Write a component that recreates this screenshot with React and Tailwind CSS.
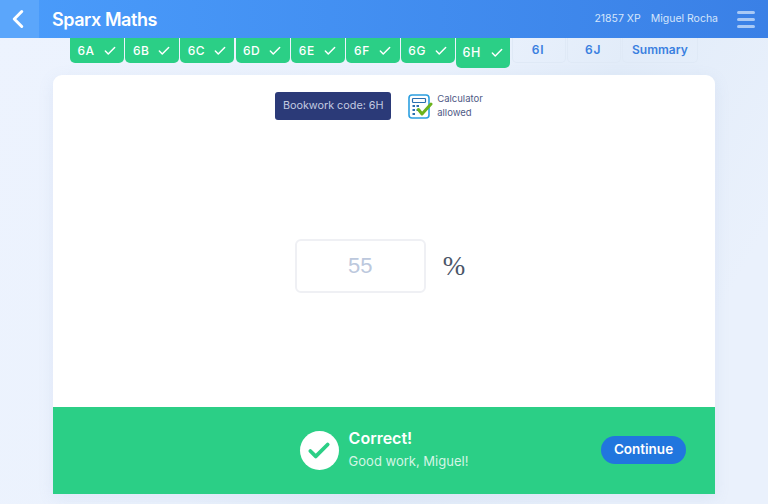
import React from 'react';
import { ChevronLeft, Check } from 'lucide-react';

const font = { fontFamily: '"Inter", "Liberation Sans", sans-serif' };

const doneTabs = ['6A', '6B', '6C', '6D', '6E', '6F', '6G'];
const todoTabs = ['6I', '6J'];

const CalculatorIcon = () => (
  <svg width="25" height="25" viewBox="0 0 25 25" fill="none">
    <rect x="1" y="1" width="20" height="23" rx="3" fill="#fff" stroke="#2b9fe0" strokeWidth="1.6" />
    <rect x="4.5" y="4.5" width="13" height="4" rx="0.8" stroke="#2b6fb0" strokeWidth="1.2" />
    <rect x="4.5" y="11" width="2.5" height="2" fill="#2b6fb0" />
    <rect x="8.5" y="11" width="2.5" height="2" fill="#2b6fb0" />
    <rect x="4.5" y="15" width="2.5" height="2" fill="#2b6fb0" />
    <rect x="8.5" y="15" width="2.5" height="2" fill="#2b6fb0" />
    <rect x="4.5" y="19" width="2.5" height="2" fill="#2b6fb0" />
    <path d="M10.5 15.5l3.5 4.5 9-10" stroke="#6cb31d" strokeWidth="3" strokeLinecap="round" strokeLinejoin="round" />
  </svg>
);

const App = () => {
  return (
    <div
      className="w-[768px] h-[504px] overflow-hidden flex flex-col items-center bg-[linear-gradient(120deg,#edf3fe_0%,#ebf2fd_45%,#e2ecf9_62%,#eaf1fc_85%)]"
      style={font}
    >
      {/* HEADER */}
      <div className="w-full h-[38px] shrink-0 flex items-center bg-[linear-gradient(90deg,#4a9cfb,#3a80e6)] text-white">
        <div className="w-[39px] h-full flex items-center justify-center bg-[#5ba6fb]">
          <ChevronLeft size={30} strokeWidth={2.4} className="text-white mr-[3px]" />
        </div>
        <span className="ml-[13px] text-[18px] font-semibold tracking-[-0.45px]">Sparx Maths</span>
        <div className="ml-auto flex items-center text-[10.5px] text-[#d5e5fb]">
          <span>21857 XP</span>
          <span className="ml-[10px]">Miguel Rocha</span>
          <div className="ml-[19px] mr-[13px] w-[18px] flex flex-col gap-[4px]">
            <div className="h-[3px] rounded-full bg-[#a9c9f5]" />
            <div className="h-[3px] rounded-full bg-[#a9c9f5]" />
            <div className="h-[3px] rounded-full bg-[#a9c9f5]" />
          </div>
        </div>
      </div>

      {/* TABS */}
      <div className="w-full h-[37px] shrink-0 flex items-start gap-[1.2px] pl-[70px]">
        {doneTabs.map((t) => (
          <div key={t} className="w-[54px] h-[25px] flex items-center justify-center gap-[8px] rounded-b-[5px] bg-[#2bcf86] text-white text-[12px] font-medium tracking-[0.5px]">
            <span>{t}</span>
            <Check size={14} strokeWidth={2.5} />
          </div>
        ))}
        <div className="w-[54px] h-[30px] flex items-center justify-center gap-[9px] rounded-b-[5px] bg-[#2bcf86] text-white text-[12.5px] font-medium tracking-[0.8px]">
          <span>6H</span>
          <Check size={14} strokeWidth={2.5} />
        </div>
        {todoTabs.map((t) => (
          <div key={t} className="w-[54px] h-[25px] pr-[1px] flex items-center justify-center rounded-b-[5px] border border-t-0 border-[#dfe9f6] text-[#3a80e0] text-[12px] font-semibold tracking-[0.8px]">
            {t}
          </div>
        ))}
        <div className="w-[76px] h-[25px] flex items-center justify-center rounded-b-[5px] border border-t-0 border-[#dfe9f6] text-[#3a80e0] text-[12px] font-semibold">
          Summary
        </div>
      </div>

      {/* CARD */}
      <div className="w-[662px] h-[419px] shrink-0 flex flex-col bg-white rounded-t-[9px] overflow-hidden shadow-[0_4px_16px_rgba(120,150,200,0.12)]">
        <div className="flex-1 flex flex-col items-center">
          <div className="mt-[17px] flex items-center ml-[-10px]">
            <div className="w-[116px] h-[28px] flex items-center justify-center rounded-[3px] bg-[#2b3a78] text-[#c3cae0] text-[10.8px]">
              Bookwork code: 6H
            </div>
            <div className="ml-[17px]"><CalculatorIcon /></div>
            <div className="ml-[4px] text-[9.5px] leading-[14px] text-[#4f5a86]">
              Calculator<br />allowed
            </div>
          </div>
          <div className="mt-[119px] flex items-center ml-[-8px]">
            <div className="w-[131px] h-[54px] pb-[1px] flex items-center justify-center rounded-[6px] border-2 border-[#eff0f4] text-[22px] text-[#bcc8dd]" style={{ fontFamily: '"Liberation Sans", sans-serif' }}>
              55
            </div>
            <span className="ml-[17px] text-[27px] text-[#4a5568]" style={{ fontFamily: '"Liberation Serif", serif' }}>%</span>
          </div>
        </div>

        {/* RESULT BANNER */}
        <div className="relative h-[87px] shrink-0 flex items-center justify-center bg-[#2bcf86]">
          <div className="flex items-center gap-[10px] ml-[0px]">
            <div className="w-[39px] h-[39px] rounded-full bg-white flex items-center justify-center">
              <Check size={26} strokeWidth={3.5} className="text-[#2bcf86]" />
            </div>
            <div className="mt-[-3px]">
              <div className="text-[16px] leading-[22px] font-semibold text-white">Correct!</div>
              <div className="mt-[2px] text-[13px] leading-[20px] text-[#d4f5e5]">Good work, Miguel!</div>
            </div>
          </div>
          <div className="absolute right-[29px] top-[29px] w-[85px] h-[28px] pb-[2px] rounded-full bg-[#2176de] flex items-center justify-center text-white text-[13.5px] font-semibold">
            Continue
          </div>
        </div>
      </div>
    </div>
  );
};

export default App;
